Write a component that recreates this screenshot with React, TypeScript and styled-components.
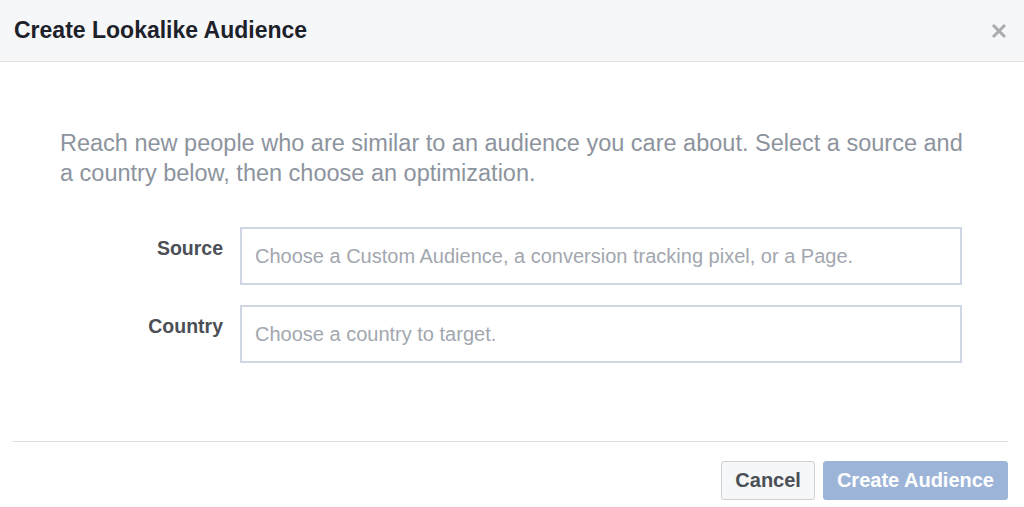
import React from "react";
import styled, { createGlobalStyle } from "styled-components";

const Global = createGlobalStyle`
  html, body { margin: 0; padding: 0; background: #ffffff; }
  body { font-family: "Liberation Sans", Arial, Helvetica, sans-serif; }
  * { box-sizing: border-box; }
`;

const Dialog = styled.div`
  width: 1024px;
  height: 507px;
  display: flex;
  flex-direction: column;
  background: #ffffff;
`;

const Header = styled.div`
  height: 62px;
  flex: none;
  display: flex;
  align-items: center;
  justify-content: space-between;
  padding: 0 17px 0 14px;
  background: #f6f7f9;
  border-bottom: 1px solid #e5e5e5;
`;

const Title = styled.h1`
  margin: 0;
  font-size: 23px;
  font-weight: bold;
  color: #1d2129;
`;

const CloseButton = styled.button`
  border: none;
  background: none;
  padding: 0;
  width: 16px;
  height: 16px;
  display: flex;
  cursor: pointer;
`;

const Body = styled.div`
  flex: 1;
  padding: 66px 62px 0 60px;
`;

const Intro = styled.p`
  margin: 0 0 39px;
  font-size: 23.5px;
  line-height: 30px;
  color: #8d949e;
  white-space: nowrap;
`;

const Form = styled.div`
  display: flex;
  flex-direction: column;
  gap: 20px;
`;

const Row = styled.div`
  display: grid;
  grid-template-columns: 163px 1fr;
  column-gap: 17px;
  align-items: start;
`;

const Label = styled.label`
  text-align: right;
  font-size: 19.5px;
  font-weight: bold;
  color: #4b4f56;
  padding-top: 10px;
`;

const Field = styled.div`
  height: 58px;
  display: flex;
  align-items: center;
  padding: 0 13px;
  border: 2px solid #ced5e3;
  font-size: 20px;
  color: #a2a7af;
  white-space: nowrap;
`;

const Footer = styled.div`
  margin: 0 16px 0 12px;
  border-top: 1px solid #dddfe2;
  display: flex;
  justify-content: flex-end;
  gap: 8px;
  padding: 19px 0 7px;
`;

const Button = styled.button<{ $primary?: boolean }>`
  height: 39px;
  padding: 0 13px;
  border-radius: 3px;
  font-family: inherit;
  font-size: 20px;
  font-weight: bold;
  border: 1px solid ${(p) => (p.$primary ? "#9cb4d8" : "#ced0d4")};
  background: ${(p) => (p.$primary ? "#9cb4d8" : "#f6f7f9")};
  color: ${(p) => (p.$primary ? "#ffffff" : "#4b4f56")};
`;

export default function App() {
  return (
    <Dialog>
      <Global />
      <Header>
        <Title>Create Lookalike Audience</Title>
        <CloseButton aria-label="Close">
          <svg width="16" height="16" viewBox="0 0 16 16">
            <path d="M2 2 L14 14 M14 2 L2 14" stroke="#a8abb0" strokeWidth="3" />
          </svg>
        </CloseButton>
      </Header>
      <Body>
        <Intro>
          Reach new people who are similar to an audience you care about. Select a source and
          <br />
          a country below, then choose an optimization.
        </Intro>
        <Form>
          <Row>
            <Label>Source</Label>
            <Field>Choose a Custom Audience, a conversion tracking pixel, or a Page.</Field>
          </Row>
          <Row>
            <Label>Country</Label>
            <Field>Choose a country to target.</Field>
          </Row>
        </Form>
      </Body>
      <Footer>
        <Button>Cancel</Button>
        <Button $primary>Create Audience</Button>
      </Footer>
    </Dialog>
  );
}
